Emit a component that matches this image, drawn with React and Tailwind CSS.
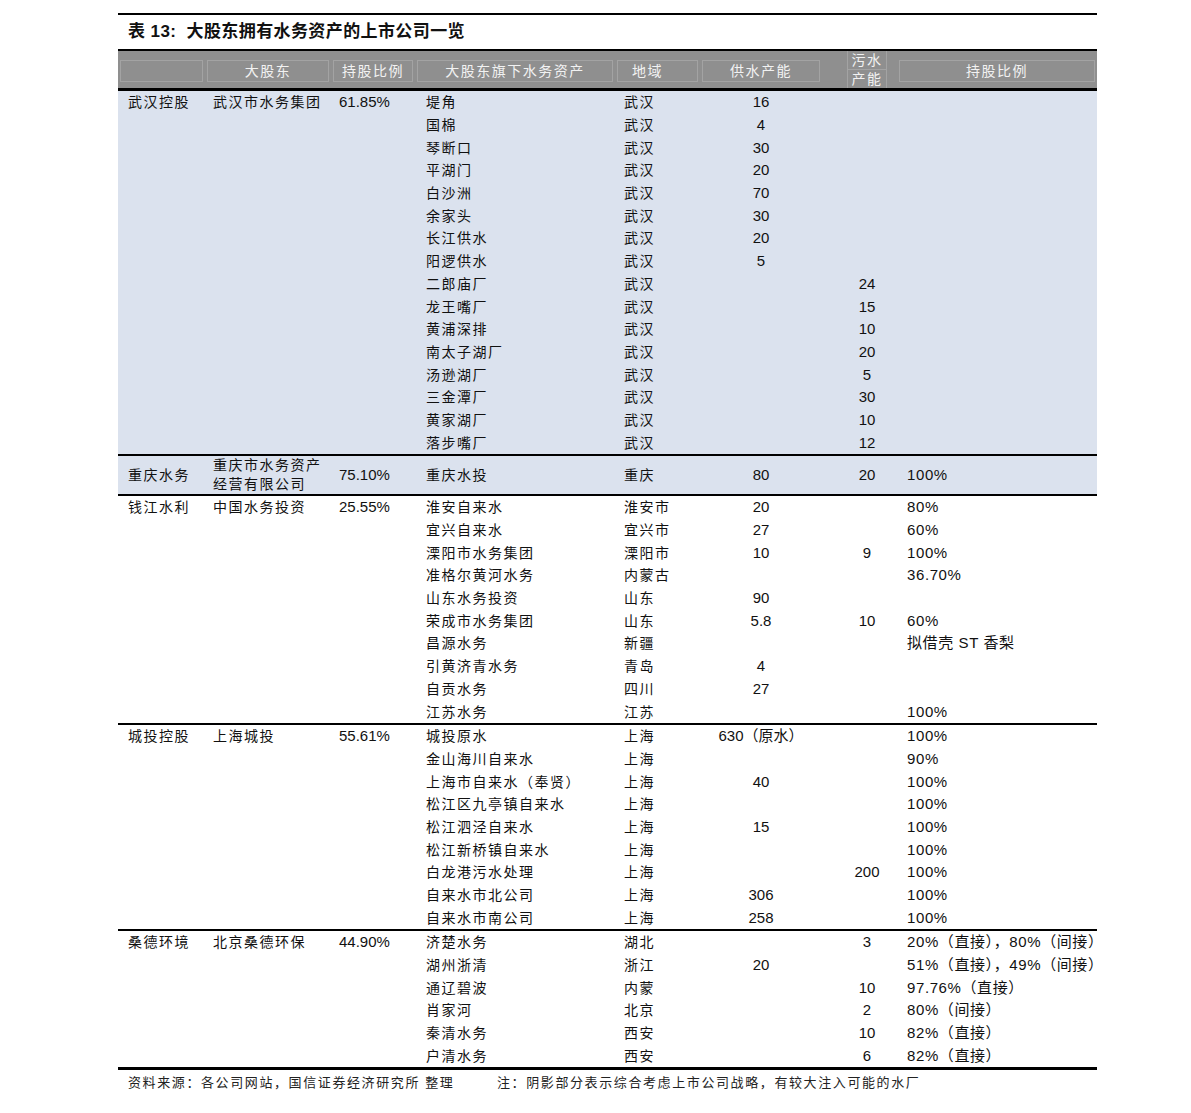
import React from "react";

const COLS = "grid grid-cols-[87px_126px_84px_200px_85px_122px_75px_200px]";

const groups = [
  {
    name: "武汉控股",
    holder: ["武汉市水务集团"],
    ratio: "61.85%",
    shaded: true,
    rows: [
      ["堤角", "武汉", "16", "", ""],
      ["国棉", "武汉", "4", "", ""],
      ["琴断口", "武汉", "30", "", ""],
      ["平湖门", "武汉", "20", "", ""],
      ["白沙洲", "武汉", "70", "", ""],
      ["余家头", "武汉", "30", "", ""],
      ["长江供水", "武汉", "20", "", ""],
      ["阳逻供水", "武汉", "5", "", ""],
      ["二郎庙厂", "武汉", "", "24", ""],
      ["龙王嘴厂", "武汉", "", "15", ""],
      ["黄浦深排", "武汉", "", "10", ""],
      ["南太子湖厂", "武汉", "", "20", ""],
      ["汤逊湖厂", "武汉", "", "5", ""],
      ["三金潭厂", "武汉", "", "30", ""],
      ["黄家湖厂", "武汉", "", "10", ""],
      ["落步嘴厂", "武汉", "", "12", ""],
    ],
  },
  {
    name: "重庆水务",
    holder: ["重庆市水务资产", "经营有限公司"],
    ratio: "75.10%",
    shaded: true,
    tall: true,
    rows: [["重庆水投", "重庆", "80", "20", "100%"]],
  },
  {
    name: "钱江水利",
    holder: ["中国水务投资"],
    ratio: "25.55%",
    rows: [
      ["淮安自来水", "淮安市", "20", "", "80%"],
      ["宜兴自来水", "宜兴市", "27", "", "60%"],
      ["溧阳市水务集团", "溧阳市", "10", "9", "100%"],
      ["准格尔黄河水务", "内蒙古", "", "", "36.70%"],
      ["山东水务投资", "山东", "90", "", ""],
      ["荣成市水务集团", "山东", "5.8", "10", "60%"],
      ["昌源水务", "新疆", "", "", "拟借壳 ST 香梨"],
      ["引黄济青水务", "青岛", "4", "", ""],
      ["自贡水务", "四川", "27", "", ""],
      ["江苏水务", "江苏", "", "", "100%"],
    ],
  },
  {
    name: "城投控股",
    holder: ["上海城投"],
    ratio: "55.61%",
    rows: [
      ["城投原水", "上海", "630（原水）", "", "100%"],
      ["金山海川自来水", "上海", "", "", "90%"],
      ["上海市自来水（奉贤）", "上海", "40", "", "100%"],
      ["松江区九亭镇自来水", "上海", "", "", "100%"],
      ["松江泗泾自来水", "上海", "15", "", "100%"],
      ["松江新桥镇自来水", "上海", "", "", "100%"],
      ["白龙港污水处理", "上海", "", "200", "100%"],
      ["自来水市北公司", "上海", "306", "", "100%"],
      ["自来水市南公司", "上海", "258", "", "100%"],
    ],
  },
  {
    name: "桑德环境",
    holder: ["北京桑德环保"],
    ratio: "44.90%",
    rows: [
      ["济楚水务", "湖北", "", "3", "20%（直接），80%（间接）"],
      ["湖州浙清", "浙江", "20", "", "51%（直接），49%（间接）"],
      ["通辽碧波", "内蒙", "", "10", "97.76%（直接）"],
      ["肖家河", "北京", "", "2", "80%（间接）"],
      ["秦清水务", "西安", "", "10", "82%（直接）"],
      ["户清水务", "西安", "", "6", "82%（直接）"],
    ],
  },
];

function HeadCell({ children, className = "" }) {
  return (
    <div className="flex h-full flex-col px-[2px] pt-[9px]">
      <div
        className={
          "flex h-[22px] items-center justify-center border border-[#a3a3a3] " +
          className
        }
      >
        {children}
      </div>
    </div>
  );
}

function Header() {
  return (
    <div className="border-t-2 border-b-[3px] border-black bg-[#8f8f8f] text-[14px] tracking-[1.5px] text-[#f2f2f2]">
      <div className={COLS + " h-[37px]"}>
        <HeadCell />
        <HeadCell>大股东</HeadCell>
        <HeadCell>持股比例</HeadCell>
        <HeadCell>大股东旗下水务资产</HeadCell>
        <HeadCell className="justify-start pl-[14px]">地域</HeadCell>
        <HeadCell>供水产能</HeadCell>
        <div className="flex h-full flex-col items-center pl-[15px]">
          <div className="flex w-[40px] flex-1 items-center justify-center border-x border-b border-[#a3a3a3] leading-none">
            污水
          </div>
          <div className="flex w-[40px] flex-1 items-center justify-center border-x border-[#a3a3a3] leading-none">
            产能
          </div>
        </div>
        <HeadCell>持股比例</HeadCell>
      </div>
    </div>
  );
}

function Group({ g, first }) {
  return (
    <div
      className={
        (first ? "" : "border-t-2 border-black ") +
        (g.shaded ? "bg-[#dbe2ee]" : "bg-white")
      }
    >
      {g.rows.map((r, i) => (
        <div
          key={i}
          className={COLS + (g.tall ? " h-[38px]" : " h-[22.7px]") + " items-center"}
        >
          <div className="pl-[10px] tracking-[1.5px]">{i === 0 ? g.name : ""}</div>
          <div className="pl-[8px] leading-[19px] tracking-[1.5px]">
            {i === 0 &&
              g.holder.map((h) => (
                <div key={h}>{h}</div>
              ))}
          </div>
          <div className="pl-[8px] text-[15px]">{i === 0 ? g.ratio : ""}</div>
          <div className="pl-[11px] tracking-[1.5px]">{r[0]}</div>
          <div className="pl-[9px] tracking-[1.5px]">{r[1]}</div>
          <div className="text-center text-[15px]">{r[2]}</div>
          <div className="pl-[15px] text-center text-[15px]">{r[3]}</div>
          <div className="pl-[10px] text-[15px] tracking-[0.6px]">{r[4]}</div>
        </div>
      ))}
    </div>
  );
}

export default function App() {
  return (
    <div className="min-h-[1113px] w-full bg-white pt-[13px] font-['Liberation_Sans','Noto_Sans_CJK_SC',sans-serif] text-[14px] leading-[22px] text-[#111]">
      <div className="ml-[118px] w-[979px]">
        <div className="border-t-2 border-black" />
        <div className="flex h-[34px] items-center pl-[10px] text-[17px] font-bold tracking-[0.4px]">
          表 13:&nbsp;&nbsp;大股东拥有水务资产的上市公司一览
        </div>
        <Header />
        {groups.map((g, i) => (
          <Group key={g.name} g={g} first={i === 0} />
        ))}
        <div className="flex border-t-[3px] border-black pt-[2px] pl-[10px] text-[13px] tracking-[1.6px] text-[#222]">
          <span className="w-[369px]">资料来源：各公司网站，国信证券经济研究所 整理</span>
          <span>注：阴影部分表示综合考虑上市公司战略，有较大注入可能的水厂</span>
        </div>
      </div>
    </div>
  );
}
